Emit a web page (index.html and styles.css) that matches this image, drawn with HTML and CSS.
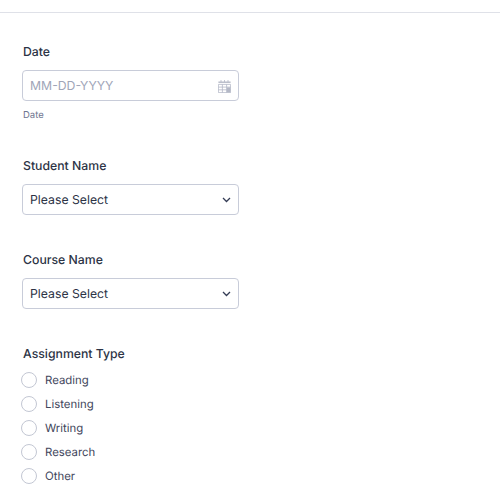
FILE: index.html
```html
<!DOCTYPE html>
<html lang="en">
<head>
    <meta charset="UTF-8">
    <meta name="viewport" content="width=device-width, initial-scale=1.0">
    <title>Assignment Form</title>
    <link rel="stylesheet" href="styles.css">
</head>
<body>
    <form class="form">
        <div class="field field-date">
            <label class="label">Date</label>
            <div class="control">
                <span class="placeholder">MM-DD-YYYY</span>
                <svg class="calendar" width="13" height="13" viewBox="0 0 13 13" fill="none" stroke="#b4b8c6" stroke-width="0.8">
                    <path d="M3 0v2M6.5 0v2M10 0v2" />
                    <path d="M0.4 2.2h12.2" stroke-width="1.4" />
                    <path d="M0.4 4.4h12.2v8.2h-12.2z" />
                    <path d="M0.4 7.1h12.2M0.4 9.8h12.2M4.4 4.4v8.2M8.6 4.4v8.2" />
                    <path d="M8.8 7.4h3.6v5h-3.6z" fill="#b4b8c6" stroke="none" />
                </svg>
            </div>
            <div class="hint">Date</div>
        </div>
        <div class="field">
            <label class="label">Student Name</label>
            <div class="control">
                <span class="value">Please Select</span>
                <svg class="chevron" width="9" height="6" viewBox="0 0 9 6" fill="none" stroke="#343c55" stroke-width="1.3">
                    <path d="M1 1l3.5 3.5 3.5-3.5" />
                </svg>
            </div>
        </div>
        <div class="field">
            <label class="label">Course Name</label>
            <div class="control">
                <span class="value">Please Select</span>
                <svg class="chevron" width="9" height="6" viewBox="0 0 9 6" fill="none" stroke="#343c55" stroke-width="1.3">
                    <path d="M1 1l3.5 3.5 3.5-3.5" />
                </svg>
            </div>
        </div>
        <div class="field field-last">
            <label class="label">Assignment Type</label>
            <ul class="options">
                <li class="option"><span class="radio"></span>Reading</li>
                <li class="option"><span class="radio"></span>Listening</li>
                <li class="option"><span class="radio"></span>Writing</li>
                <li class="option"><span class="radio"></span>Research</li>
                <li class="option"><span class="radio"></span>Other</li>
            </ul>
        </div>
    </form>
</body>
</html>
```

FILE: styles.css
```css
body {
    margin: 0;
    font-family: Inter, sans-serif;
    color: #2c3345;
    background-color: #fff;
    text-rendering: geometricPrecision;
}
.form {
    border-top: 1px solid #dfe1e8;
    margin-top: 12px;
    padding: 28px 22px 0;
}
.field {
    width: 217px;
    margin-bottom: 34px;
}
.field-date {
    margin-bottom: 32px;
}
.field-last {
    margin-bottom: 0;
}
.label {
    display: block;
    font-size: 12.25px;
    line-height: 19px;
    padding-top: 1px;
    font-weight: 500;
    padding-left: 1px;
}
.control {
    box-sizing: border-box;
    height: 31px;
    margin-top: 9px;
    display: flex;
    align-items: center;
    justify-content: space-between;
    padding: 0 7px;
    border: 1px solid #c8ccd9;
    border-radius: 4px;
    font-size: 12.25px;
}
.placeholder {
    color: #a0a5b8;
}
.value {
    color: #2c3345;
}
.calendar {
    margin-top: 1px;
}
.hint {
    font-size: 9.5px;
    line-height: 14px;
    color: #6f7690;
    margin-top: 8px;
    padding-left: 1px;
}
.options {
    list-style-type: none;
    display: flex;
    flex-direction: column;
    gap: 8px;
    margin: 9px 0 0;
    padding: 0;
}
.option {
    display: flex;
    align-items: center;
    height: 16px;
    font-size: 11.4px;
    line-height: 14px;
    color: #3f465c;
}
.radio {
    box-sizing: border-box;
    width: 16px;
    height: 16px;
    border: 1px solid #c3c7d3;
    border-radius: 50%;
    margin-left: -1px;
    margin-right: 8px;
}
```
